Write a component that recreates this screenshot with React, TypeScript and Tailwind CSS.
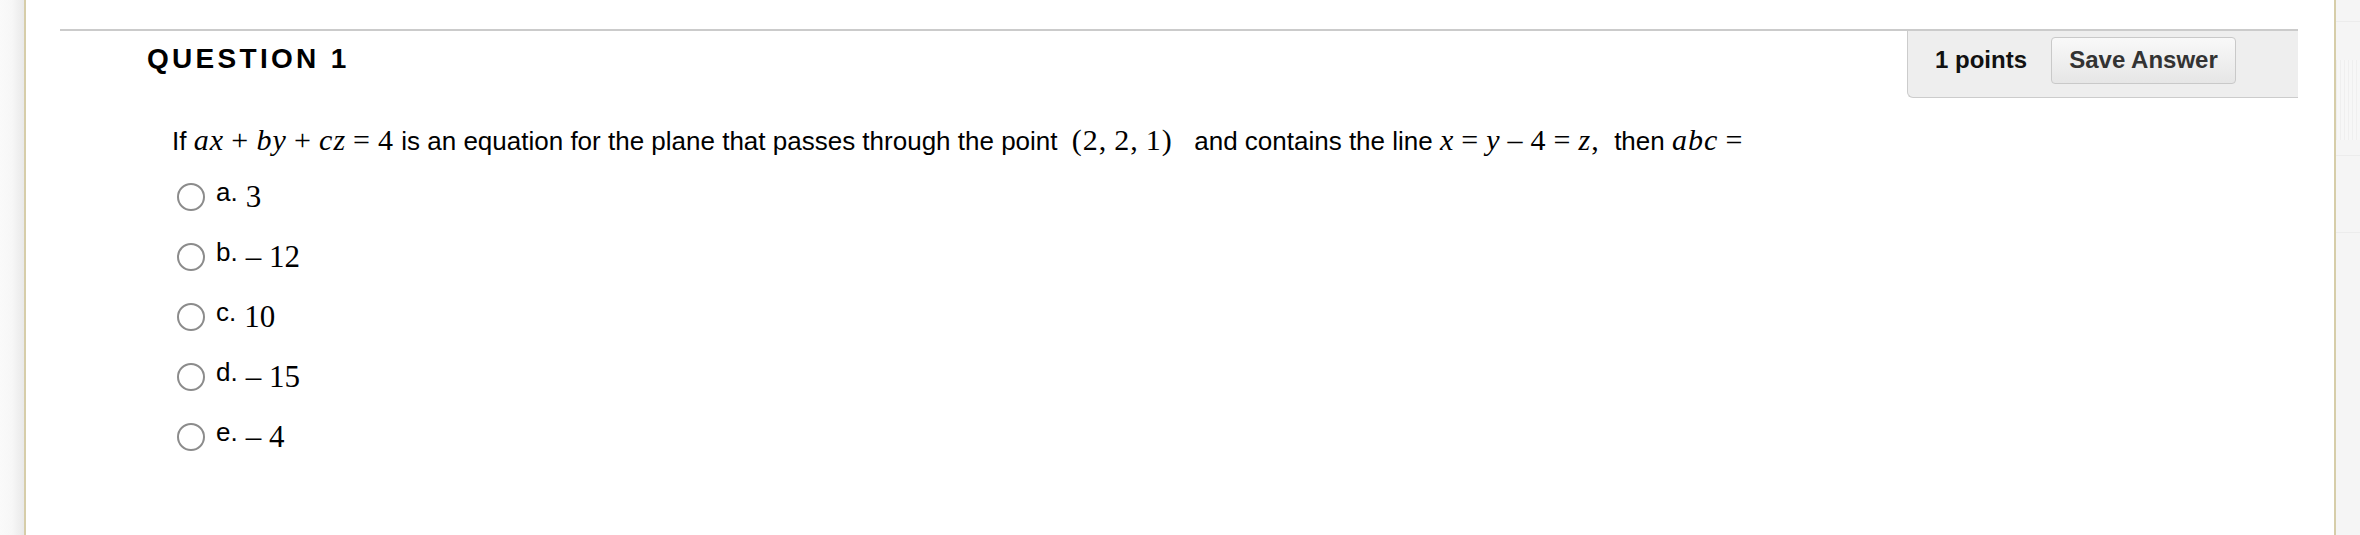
import React from 'react';

const options = [
  { letter: 'a.', value: '3' },
  { letter: 'b.', value: '– 12' },
  { letter: 'c.', value: '10' },
  { letter: 'd.', value: '– 15' },
  { letter: 'e.', value: '– 4' },
];

function M({ children, i }: { children: React.ReactNode; i?: boolean }) {
  return (
    <span className={`font-['Liberation_Serif',serif] text-[30px] tracking-[1px] ${i ? 'italic' : ''}`}>
      {children}
    </span>
  );
}

export default function App() {
  return (
    <div className="flex h-[535px] bg-[#f7f7f7] font-['Liberation_Sans',Arial,sans-serif] text-black">
      {/* left gutter */}
      <div className="w-[24px] bg-gradient-to-r from-[#fafafa] via-[#f7f7f7] to-[#e9e9e9]" />

      {/* main content */}
      <div className="flex-1 bg-white border-x-2 border-[#d6cda9] pl-[34px] pr-[36px] pt-[29px]">
        <div className="border-t-2 border-[#cbcbcb]">
          {/* Header */}
          <div className="flex justify-between items-start">
            <h2 className="pl-[87px] pt-[12px] text-[28px] leading-[32px] font-bold tracking-[3.3px]">
              QUESTION 1
            </h2>
            <div className="w-[391px] h-[67px] pb-[8px] pl-[27px] flex items-center bg-[#eeeeee] border-l border-b border-[#cccccc] rounded-bl-[6px]">
              <span className="text-[24px] font-bold text-[#111]">1 points</span>
              <button className="ml-[24px] w-[185px] h-[47px] rounded-[4px] border border-[#c9c9c9] bg-gradient-to-b from-[#f9f9f9] to-[#e6e6e6] text-[24px] font-bold text-[#333]">
                Save Answer
              </button>
            </div>
          </div>

          {/* Question text */}
          <p className="pl-[112px] mt-[26px] text-[26px] leading-[32px] whitespace-nowrap">
            If <M i>ax</M> <M>+</M> <M i>by</M> <M>+</M> <M i>cz</M>
            <M>{'\u2009=\u20094'}</M> is an equation for the plane that passes through the point{' '}
            <M>{'\u2009(2,\u20092,\u20091)\u2009'}</M>&nbsp; and contains the line <M i>x</M>
            <M>{'\u2009=\u2009'}</M>
            <M i>y</M>
            <M>{'\u2009–\u20094\u2009=\u2009'}</M>
            <M i>z</M>
            <M>,</M>&nbsp;&nbsp;then <M i>abc</M> <M>=</M>
          </p>

          {/* Options */}
          <div className="pl-[117px] mt-[10px] flex flex-col">
            {options.map((option) => (
              <label key={option.letter} className="h-[60px] flex items-center">
                <span className="w-[28px] h-[28px] rounded-full border-[2.5px] border-[#8c8c8c] bg-white shrink-0" />
                <span className="ml-[11px] whitespace-nowrap">
                  <span className="text-[26px] align-[6px]">{option.letter}</span>
                  <span className="ml-[8px] font-['Liberation_Serif',serif] text-[31px]">{option.value}</span>
                </span>
              </label>
            ))}
          </div>
        </div>
      </div>

      {/* right gutter */}
      <div className="w-[24px] bg-[#f5f5f5] flex flex-col">
        <div className="h-[22px] border-b border-[#ececec]" />
        <div className="mt-[38px] h-[80px] bg-[repeating-linear-gradient(90deg,#efefef_0px,#efefef_1px,#f7f7f7_1px,#f7f7f7_4px)]" />
        <div className="mt-[15px] h-[78px] border-t border-b border-[#ececec]" />
      </div>
    </div>
  );
}
